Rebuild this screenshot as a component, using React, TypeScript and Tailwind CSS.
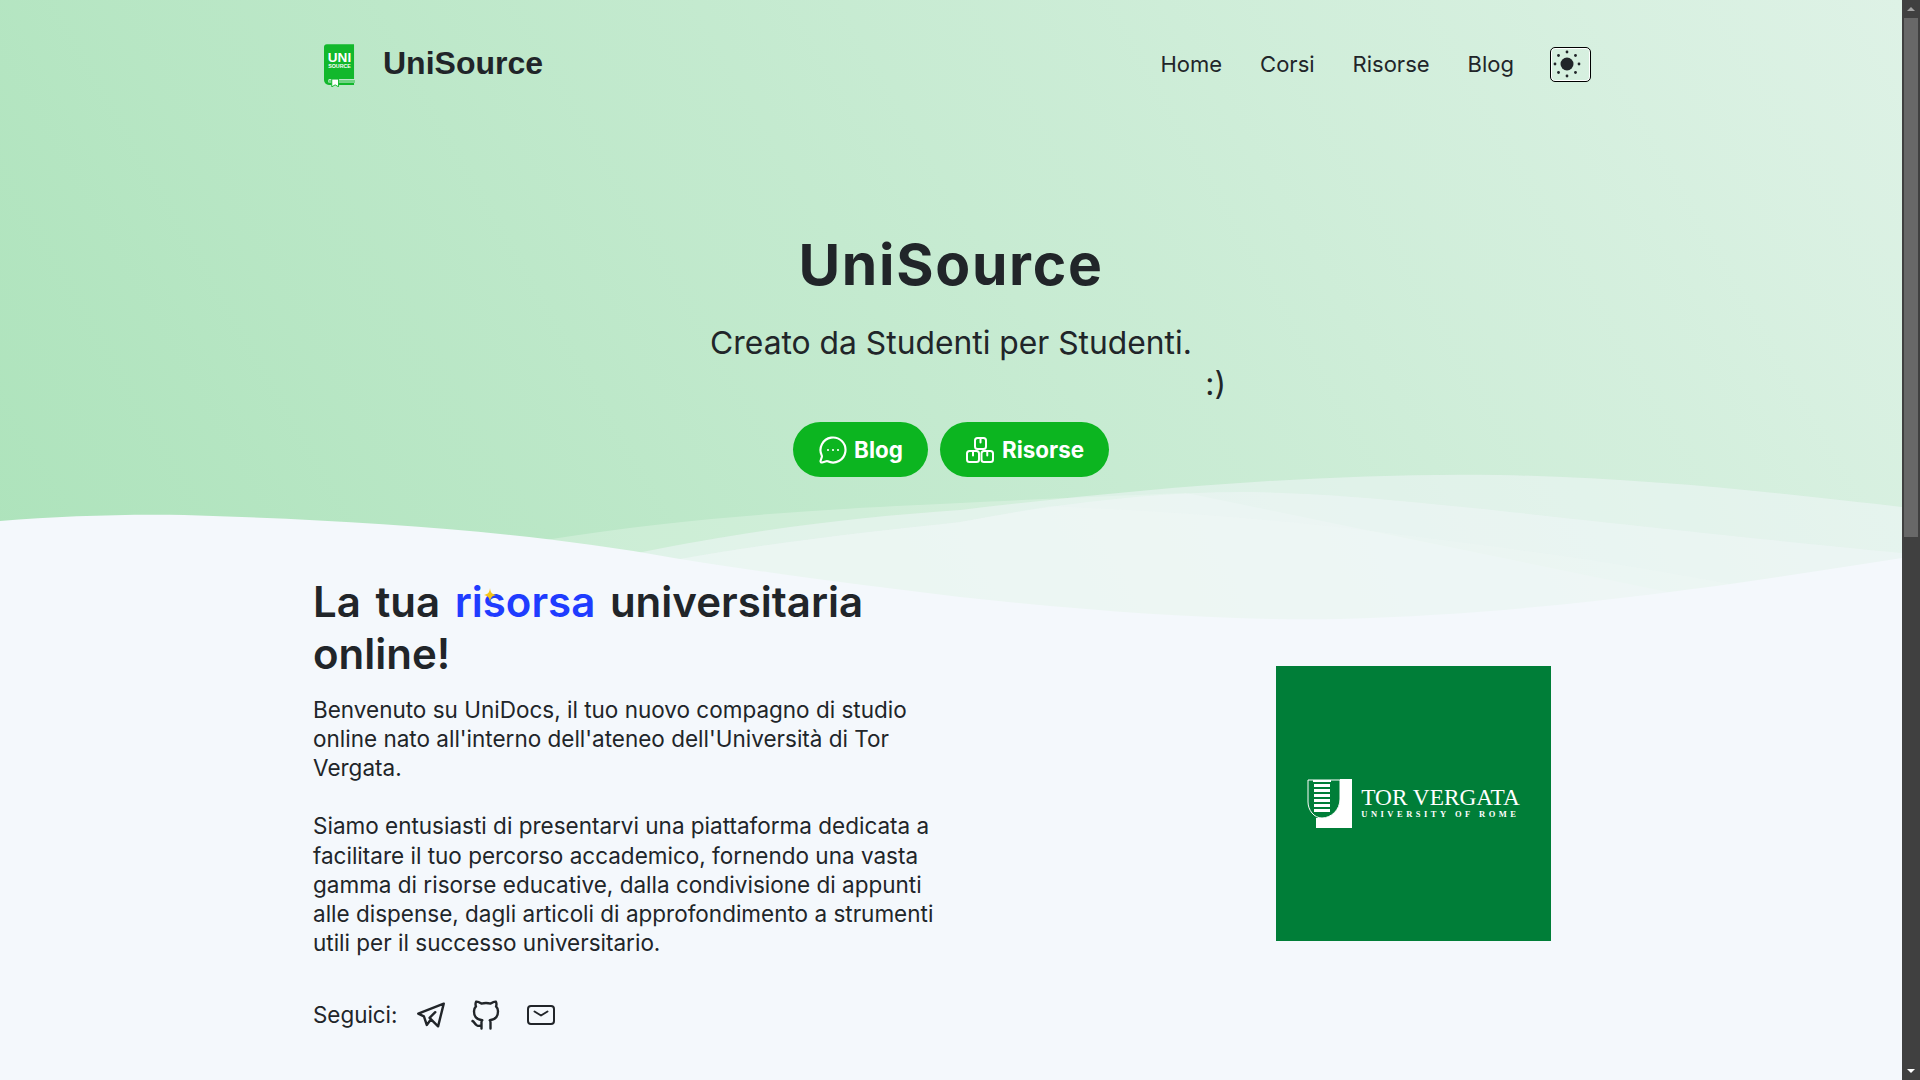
import { TbBrandGithub, TbBrandTelegram } from "react-icons/tb";
import { MessageCircleMore } from "lucide-react";

function Logo() {
  return (
    <svg width="31" height="43" viewBox="0 0 32 44" className="block">
      <path d="M3 0h28v36H5a3 3 0 0 0 0 4h26v2H5a5 5 0 0 1-5-5V3a3 3 0 0 1 3-3z" fill="#12b82c" />
      <path d="M5 37h27v3H5z" fill="#6fd483" />
      <path d="M8 36h7v8l-3.500-2-3.500 2z" fill="#fff" stroke="#12b82c" />
      <text x="16" y="18" textAnchor="middle" fill="#fff" fontFamily="Liberation Sans" fontWeight="700" fontSize="14">UNI</text>
      <text x="16" y="25" textAnchor="middle" fill="#fff" fontFamily="Liberation Sans" fontWeight="700" fontSize="5.500">SOURCE</text>
    </svg>
  );
}

function Sun() {
  const dots = [0, 45, 90, 135, 180, 225, 270, 315];
  return (
    <svg width="28" height="28" viewBox="0 0 28 28" className="block">
      <circle cx="14" cy="14" r="6.500" fill="#212529" />
      {dots.map((a) => (
        <circle
          key={a}
          cx={14 + 12 * Math.cos((a * Math.PI) / 180)}
          cy={14 + 12 * Math.sin((a * Math.PI) / 180)}
          r="1.400"
          fill="#212529"
        />
      ))}
    </svg>
  );
}

function Boxes() {
  return (
    <svg width="28" height="26" viewBox="0 0 28 26" fill="none" stroke="#fff" strokeWidth="2" strokeLinecap="round" strokeLinejoin="round" className="block shrink-0">
      <rect x="9" y="1" width="11" height="11" rx="2.500" />
      <path d="M14.500 1.500v4" />
      <rect x="1" y="14" width="12" height="11" rx="2.500" />
      <path d="M7 14.500v4" />
      <rect x="15.500" y="14" width="11.500" height="11" rx="2.500" />
      <path d="M21.250 14.500v4" />
    </svg>
  );
}

function Waves() {
  return (
    <svg className="absolute left-0 top-[440px] block" width="1902" height="200" viewBox="0 440 1902 200">
      <path d="M545 540C700 515 850 508 960 503C1040 499 1110 496 1186 493L1902 640L545 640Z" fill="#ffffff" fillOpacity="0.25" />
      <path d="M637 553C760 528 860 517 960 510C1130 490 1320 472 1500 475C1650 478 1790 494 1902 507V640H637Z" fill="#f4f8fc" fillOpacity="0.5" />
      <path d="M680 559C780 541 870 532 960 522C1060 503 1160 491 1254 492C1400 495 1540 518 1902 553V640H680Z" fill="#f4f8fc" fillOpacity="0.4" />
      <path d="M680 559C780 541 870 532 960 522C1000 515 1025 510 1050 506C1190 512 1310 522 1419 537C1540 552 1640 566 1760 590L1902 640H680Z" fill="#f4f8fc" fillOpacity="0.2" />
      <path d="M0 521C60 516 125 514 184 515C350 520 520 530 674 558C780 575 870 586 960 597C1100 612 1230 621 1340 619C1550 613 1730 585 1902 558V640H0Z" fill="#f4f8fc" />
    </svg>
  );
}

function Shield() {
  return (
    <svg width="46" height="50" viewBox="0 0 46 50" className="block shrink-0">
      <path d="M33 0H45V49H9V39C22 39 33 33 33 20Z" fill="#fff" />
      <path d="M1 1H33V20C33 31 24 39 15 39C7 39 1 31 1 23Z" fill="#007e38" stroke="#fff" strokeWidth="1" />
      {[5, 10, 15, 20, 25, 30].map((y) => (
        <rect key={y} x="7" y={y} width="16" height="3" fill="#fff" />
      ))}
      <rect x="6" y="1" width="18" height="2" fill="#fff" />
    </svg>
  );
}

export default function App() {
  return (
    <div className="flex h-screen w-full overflow-hidden bg-[#f4f8fc] font-['Inter',sans-serif] text-[#212529]">
      <div className="relative min-w-0 flex-1">
        <div className="relative h-[620px] bg-[linear-gradient(60deg,#ade3bb_0%,#def2e6_100%)]">
          <Waves />
          <div className="relative mx-auto w-[1276px]">
            <header className="flex h-[128px] items-center justify-between">
              <div className="flex items-center">
                <span className="ml-[11px] mt-[3px]"><Logo /></span>
                <span className="ml-[28px] -mt-[2px] font-['Liberation_Sans',sans-serif] text-[32px] font-bold">UniSource</span>
              </div>
              <nav className="-mr-[2px] flex items-center text-[22px]">
                <a className="mr-[38px]">Home</a>
                <a className="mr-[38px]">Corsi</a>
                <a className="mr-[38px]">Risorse</a>
                <a className="mr-[36px]">Blog</a>
                <span className="flex h-[35px] w-[41px] items-center rounded-[5px] border border-black pl-[2px] shadow-[inset_0_0_0_1px_#fff]"><Sun /></span>
              </nav>
            </header>
            <div className="flex flex-col items-center">
              <h1 className="mt-[104px] h-[66px] text-[57px] font-bold leading-[66px] tracking-[0.030em]">UniSource</h1>
              <p className="mt-[24px] text-[31.800px] leading-[41px]">Creato da Studenti per Studenti.</p>
              <p className="w-[550px] text-right text-[31.800px] leading-[41px]">:)</p>
              <div className="mt-[18px] flex gap-3 text-[22.400px] font-bold text-white">
                <a className="flex h-[55px] w-[135px] items-center justify-center gap-[6px] rounded-full bg-[#0cb520]">
                  <MessageCircleMore size={30} strokeWidth={1.700} />
                  Blog
                </a>
                <a className="flex h-[55px] w-[169px] items-center justify-center gap-[8px] rounded-full bg-[#0cb520] pl-[1px]">
                  <Boxes />
                  Risorse
                </a>
              </div>
            </div>
          </div>
        </div>
        <main className="relative mx-auto -mt-[44px] flex w-[1276px] items-start">
          <section className="w-[625px]">
            <h2 className="w-[600px] text-[42px] font-semibold leading-[52px] [word-spacing:4px]">
              La tua{" "}
              <span className="relative text-[#1f3cff]">
                risorsa
                <svg width="12" height="14" viewBox="0 0 12 14" className="absolute left-[29px] top-[12px]">
                  <path d="M6 0C6.500 4 7.500 6 12 7C7.500 8 6.500 10 6 14C5.500 10 4.500 8 0 7C4.500 6 5.500 4 6 0Z" fill="#f5c518" />
                </svg>
              </span>{" "}
              universitaria online!
            </h2>
            <p className="mt-[15px] text-[22.500px] leading-[29.120px]">
              Benvenuto su UniDocs, il tuo nuovo compagno di studio online nato all'interno dell'ateneo dell'Università di Tor Vergata.
            </p>
            <p className="mt-[29px] text-[22.500px] leading-[29.120px]">
              Siamo entusiasti di presentarvi una piattaforma dedicata a facilitare il tuo percorso accademico, fornendo una vasta gamma di risorse educative, dalla condivisione di appunti alle dispense, dagli articoli di approfondimento a strumenti utili per il successo universitario.
            </p>
            <div className="mt-[40px] flex items-center text-[22.400px]">
              <span>Seguici:</span>
              <TbBrandTelegram size={34} strokeWidth={1.700} className="ml-[17px]" />
              <TbBrandGithub size={36} strokeWidth={1.600} className="ml-[20px]" />
              <svg width="28" height="20" viewBox="0 0 28 20" fill="none" stroke="#212529" strokeWidth="2" strokeLinecap="round" strokeLinejoin="round" className="ml-[23px]">
                <rect x="1" y="1" width="26" height="18" rx="3" />
                <path d="M7.500 6.500l6.500 4 6.500-4" />
              </svg>
            </div>
          </section>
          <div className="ml-[338px] mt-[90px] flex h-[275px] w-[275px] shrink-0 items-center justify-center bg-[#007e38] text-white">
            <div className="flex items-center gap-[8px] font-['Liberation_Serif',serif]">
              <Shield />
              <div className="flex flex-col pb-[2px]">
                <span className="text-[23.300px] leading-[23px]">TOR VERGATA</span>
                <span className="whitespace-nowrap text-[8.500px] font-bold leading-[11px] tracking-[3.500px]">UNIVERSITY OF ROME</span>
              </div>
            </div>
          </div>
        </main>
      </div>
      <aside className="flex h-full w-[18px] shrink-0 flex-col items-center bg-[#404040]">
        <div className="flex h-[18px] items-center justify-center">
          <span className="h-0 w-0 border-x-[4px] border-b-[4px] border-x-transparent border-b-[#a3a3a3]" />
        </div>
        <div className="h-[519px] w-[14px] bg-[#686868]" />
        <div className="mt-auto flex h-[18px] items-center justify-center">
          <span className="h-0 w-0 border-x-[4px] border-t-[4px] border-x-transparent border-t-white" />
        </div>
      </aside>
    </div>
  );
}
